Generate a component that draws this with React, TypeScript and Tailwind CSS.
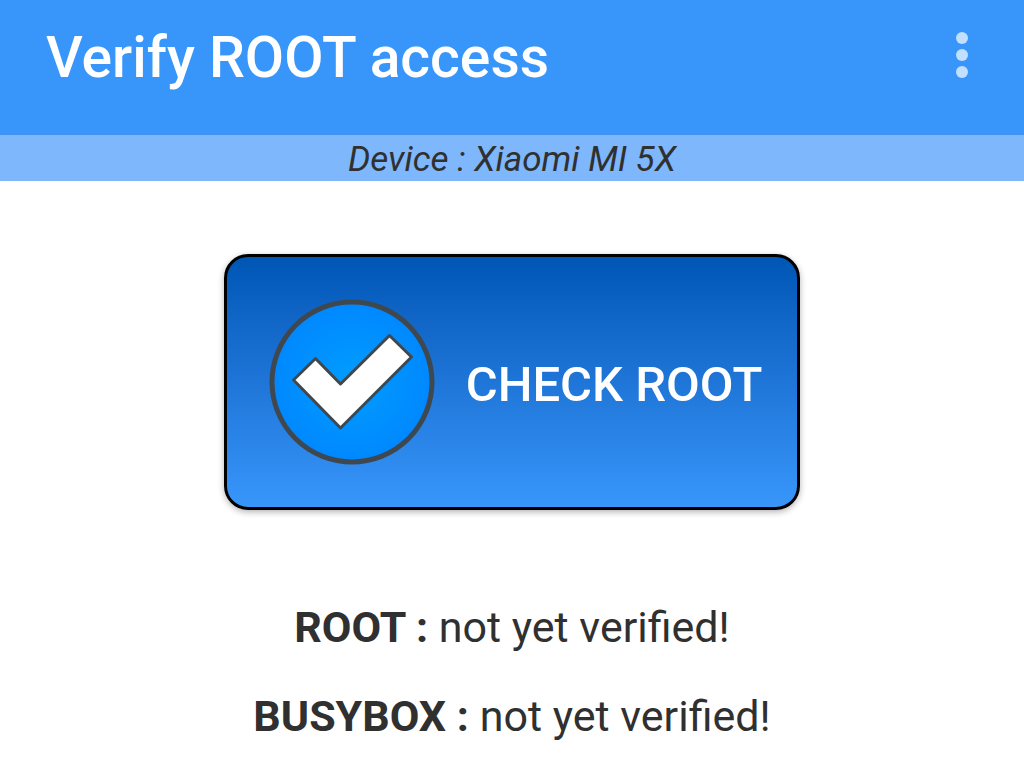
import type { ReactNode } from "react";

function CheckIcon() {
  return (
    <svg viewBox="0 0 168 168" className="size-[168px] shrink-0" aria-hidden="true">
      <defs>
        <radialGradient id="disc">
          <stop offset="0" stopColor="#009dff" />
          <stop offset="1" stopColor="#0088ff" />
        </radialGradient>
      </defs>
      <circle cx="84" cy="84" r="80" fill="url(#disc)" stroke="#40484f" strokeWidth="5" />
      <path
        d="M25.5 82 L47.5 60.5 L72.5 86 L121.5 37.5 L143.5 59 L72.5 130 Z"
        fill="#fff"
        stroke="#40484f"
        strokeWidth="3"
        strokeLinejoin="round"
      />
    </svg>
  );
}

function StatusLine({ label, children }: { label: string; children: ReactNode }) {
  return (
    <p>
      <strong className="font-bold">{label} :</strong> {children}
    </p>
  );
}

export default function App() {
  return (
    <div className="min-h-screen overflow-hidden bg-white font-['Roboto',sans-serif] text-[#303030]">
      <header className="flex h-[135px] items-start justify-between border-b border-[#4094f0] bg-[#3896fb] pl-[46px] pr-[42px] pt-[22px] text-white">
        <h1 className="text-[57px] leading-[72px] font-medium">Verify ROOT access</h1>
        <button
          type="button"
          aria-label="More options"
          className="flex h-[66px] w-10 flex-col items-center justify-center gap-[5px]"
        >
          <span className="size-3 rounded-full bg-[#c3dffe]" />
          <span className="size-3 rounded-full bg-[#c3dffe]" />
          <span className="size-3 rounded-full bg-[#c3dffe]" />
        </button>
      </header>

      <p className="bg-[#7eb7fb] pt-1 text-center text-[35px] leading-[42px] italic">
        Device : Xiaomi MI 5X
      </p>

      <main className="flex flex-col items-center pt-[73px]">
        <button
          type="button"
          className="flex h-[256px] items-center gap-[30px] rounded-3xl border-3 border-black bg-linear-to-b from-[#0056b5] to-[#3896fb] pl-[41px] pr-[35px] text-[49px] font-medium text-white shadow-[0_2px_6px_rgba(0,0,0,0.3)]"
        >
          <CheckIcon />
          <span className="pt-1.5">CHECK ROOT</span>
        </button>

        <div className="mt-[87px] flex flex-col gap-[29px] text-center text-[43px] leading-[60px]">
          <StatusLine label="ROOT">not yet verified!</StatusLine>
          <StatusLine label="BUSYBOX">not yet verified!</StatusLine>
        </div>
      </main>
    </div>
  );
}
